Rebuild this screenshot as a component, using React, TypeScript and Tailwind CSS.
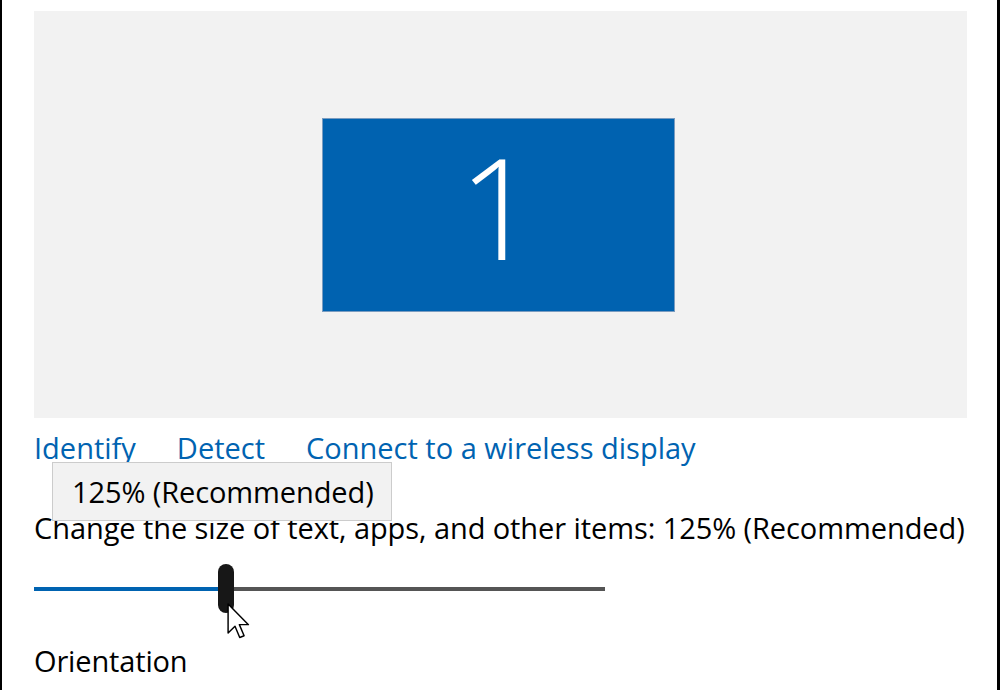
import React from "react";

export default function App() {
  const font = { fontFamily: '"Open Sans", "Noto Sans", sans-serif' };
  return (
    <div
      className="relative w-[1000px] h-[690px] overflow-hidden bg-white border-l-2 border-r-[3px] border-l-black border-r-black text-black"
      style={font}
    >
      <div className="pl-[32px] pt-[11px]">
        <div className="w-[933px] h-[407px] bg-[#f2f2f2] flex items-center justify-center pr-[4px]">
          <div className="w-[353px] h-[194px] bg-[#0062b0] border border-[#7a9cc0] flex items-center justify-center pb-[19px]">
            <span className="text-white text-[141px] leading-none font-light" style={{ fontFamily: '"Open Sans", sans-serif' }}>1</span>
          </div>
        </div>

        <div className="relative mt-[12px]">
          <div className="flex text-[29px] leading-[36px] text-[#0063b1]">
            <span>Identify</span>
            <span className="ml-[41px]">Detect</span>
            <span className="ml-[41px]">Connect to a wireless display</span>
          </div>
          <div className="absolute left-[18px] top-[32px] w-[340px] h-[59px] bg-[#f2f2f2] border border-[#cccccc] flex items-center pl-[19px] text-[29px] tracking-[-0.1px] z-10">
            125% (Recommended)
          </div>
          <div className="mt-[44px] text-[29px] leading-[36px] tracking-[-0.08px] whitespace-nowrap">
            Change the size of text, apps, and other items: 125% (Recommended)
          </div>
        </div>

        <div className="relative mt-[18px] w-[571px] h-[49px] flex items-center">
          <div className="h-[4px] w-[186px] bg-[#0063b1]" />
          <div className="h-[4px] flex-1 bg-[#555555]" />
          <div className="absolute left-[184px] top-0 w-[16px] h-[49px] rounded-full bg-[#171717]" />
          <svg className="absolute left-[193px] top-[39px]" width="24" height="40" viewBox="0 0 13 22">
            <path d="M0.5 0.5 L0.5 16.5 L4.3 12.8 L6.9 19 L9.3 18 L6.7 11.9 L11.7 11.9 Z" fill="white" stroke="black" strokeWidth="0.8" strokeLinejoin="round" />
          </svg>
        </div>

        <div className="mt-[30px] text-[29px] leading-[36px] tracking-[-0.15px]">Orientation</div>
      </div>
    </div>
  );
}
